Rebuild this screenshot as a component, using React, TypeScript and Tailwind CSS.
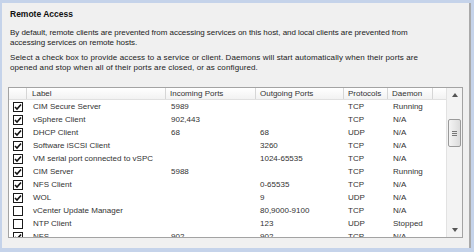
const rows = [
  { label: "CIM Secure Server", incoming: "5989", outgoing: "", proto: "TCP", daemon: "Running", on: true },
  { label: "vSphere Client", incoming: "902,443", outgoing: "", proto: "TCP", daemon: "N/A", on: true },
  { label: "DHCP Client", incoming: "68", outgoing: "68", proto: "UDP", daemon: "N/A", on: true },
  { label: "Software iSCSI Client", incoming: "", outgoing: "3260", proto: "TCP", daemon: "N/A", on: true },
  { label: "VM serial port connected to vSPC", incoming: "", outgoing: "1024-65535", proto: "TCP", daemon: "N/A", on: true },
  { label: "CIM Server", incoming: "5988", outgoing: "", proto: "TCP", daemon: "Running", on: true },
  { label: "NFS Client", incoming: "", outgoing: "0-65535", proto: "TCP", daemon: "N/A", on: true },
  { label: "WOL", incoming: "", outgoing: "9", proto: "UDP", daemon: "N/A", on: true },
  { label: "vCenter Update Manager", incoming: "", outgoing: "80,9000-9100", proto: "TCP", daemon: "N/A", on: false },
  { label: "NTP Client", incoming: "", outgoing: "123", proto: "UDP", daemon: "Stopped", on: false },
  { label: "NFS", incoming: "902", outgoing: "902", proto: "TCP", daemon: "N/A", on: true },
];

function Check({ on }: { on: boolean }) {
  return (
    <span className="grid h-[10px] w-[10px] place-items-center border border-[#1a1a1a] bg-white">
      {on && (
        <svg width="8" height="8" viewBox="0 0 8 8">
          <path d="M1 4 L3 6 L7 1.5" fill="none" stroke="#111" strokeWidth="1.6" />
        </svg>
      )}
    </span>
  );
}

function ScrollBar() {
  return (
    <div className="flex w-[16px] flex-col border-l border-[#e2e2e2] bg-[#f3f3f3]">
      <div className="grid h-[14px] place-items-center">
        <svg width="6" height="4" viewBox="0 0 6 4">
          <path d="M0 4 L3 0 L6 4 Z" fill="#555" />
        </svg>
      </div>
      <div className="h-[17px]" />
      <div className="mx-[1px] grid h-[28px] place-items-center rounded-[2px] border border-[#9a9a9a] bg-gradient-to-r from-[#f4f4f4] to-[#dcdcdc]">
        <div className="flex flex-col gap-[1px]">
          <span className="h-px w-[5px] bg-[#777]" />
          <span className="h-px w-[5px] bg-[#777]" />
          <span className="h-px w-[5px] bg-[#777]" />
        </div>
      </div>
      <div className="flex-1" />
      <div className="grid h-[14px] place-items-center">
        <svg width="6" height="4" viewBox="0 0 6 4">
          <path d="M0 0 L3 4 L6 0 Z" fill="#555" />
        </svg>
      </div>
    </div>
  );
}

export default function App() {
  return (
    <div
      className="h-[252px] w-[474px] overflow-hidden bg-[#c5d3ea] pb-[4px] pl-[2px] pr-[3px] pt-[3px] text-[#222]"
      style={{ fontFamily: '"Liberation Sans", Arial, sans-serif' }}
    >
      <div className="flex h-full flex-col border-r-2 border-[#a9a9a9] bg-[#f0f0f0]">
        <div className="px-[8px] pt-[6px]">
          <h1 className="text-[8.5px] font-bold leading-[11px] text-[#111]">Remote Access</h1>
          <p className="mt-[8px] whitespace-nowrap text-[8px] leading-[10px] tracking-[-0.05px]">
            By default, remote clients are prevented from accessing services on this host, and local clients are prevented from
            <br />
            accessing services on remote hosts.
          </p>
          <p className="mt-[5px] whitespace-nowrap text-[8px] leading-[10px] tracking-[0.1px]">
            Select a check box to provide access to a service or client. Daemons will start automatically when their ports are
            <br />
            opened and stop when all of their ports are closed, or as configured.
          </p>
        </div>
        <div className="mx-[6px] mt-[14px] flex h-[151px] border border-[#a3a3a3] bg-white text-[8px] text-[#333]">
          <div className="flex-1 overflow-hidden">
            <div className="flex h-[12px] items-center border-b border-[#e0e0e0] bg-gradient-to-b from-white to-[#f2f2f2] leading-[12px]">
              <div className="h-full w-[18px] border-r border-[#d6d6d6]" />
              <div className="h-full w-[139px] border-r border-[#d6d6d6] pl-[5px]">Label</div>
              <div className="h-full w-[90px] border-r border-[#d6d6d6] pl-[4px]">Incoming Ports</div>
              <div className="h-full w-[88px] border-r border-[#d6d6d6] pl-[4px]">Outgoing Ports</div>
              <div className="h-full w-[44px] border-r border-[#d6d6d6] pl-[4px]">Protocols</div>
              <div className="h-full w-[45px] border-r border-[#d6d6d6] pl-[4px]">Daemon</div>
            </div>
            {rows.map((r) => (
              <div key={r.label} className="flex h-[13px] items-center">
                <div className="flex w-[18px] justify-center">
                  <Check on={r.on} />
                </div>
                <div className="w-[139px] pl-[6px]">{r.label}</div>
                <div className="w-[90px] pl-[5px]">{r.incoming}</div>
                <div className="w-[88px] pl-[4px]">{r.outgoing}</div>
                <div className="w-[44px] pl-[4px]">{r.proto}</div>
                <div className="w-[45px] pl-[5px]">{r.daemon}</div>
              </div>
            ))}
          </div>
          <ScrollBar />
        </div>
      </div>
    </div>
  );
}
